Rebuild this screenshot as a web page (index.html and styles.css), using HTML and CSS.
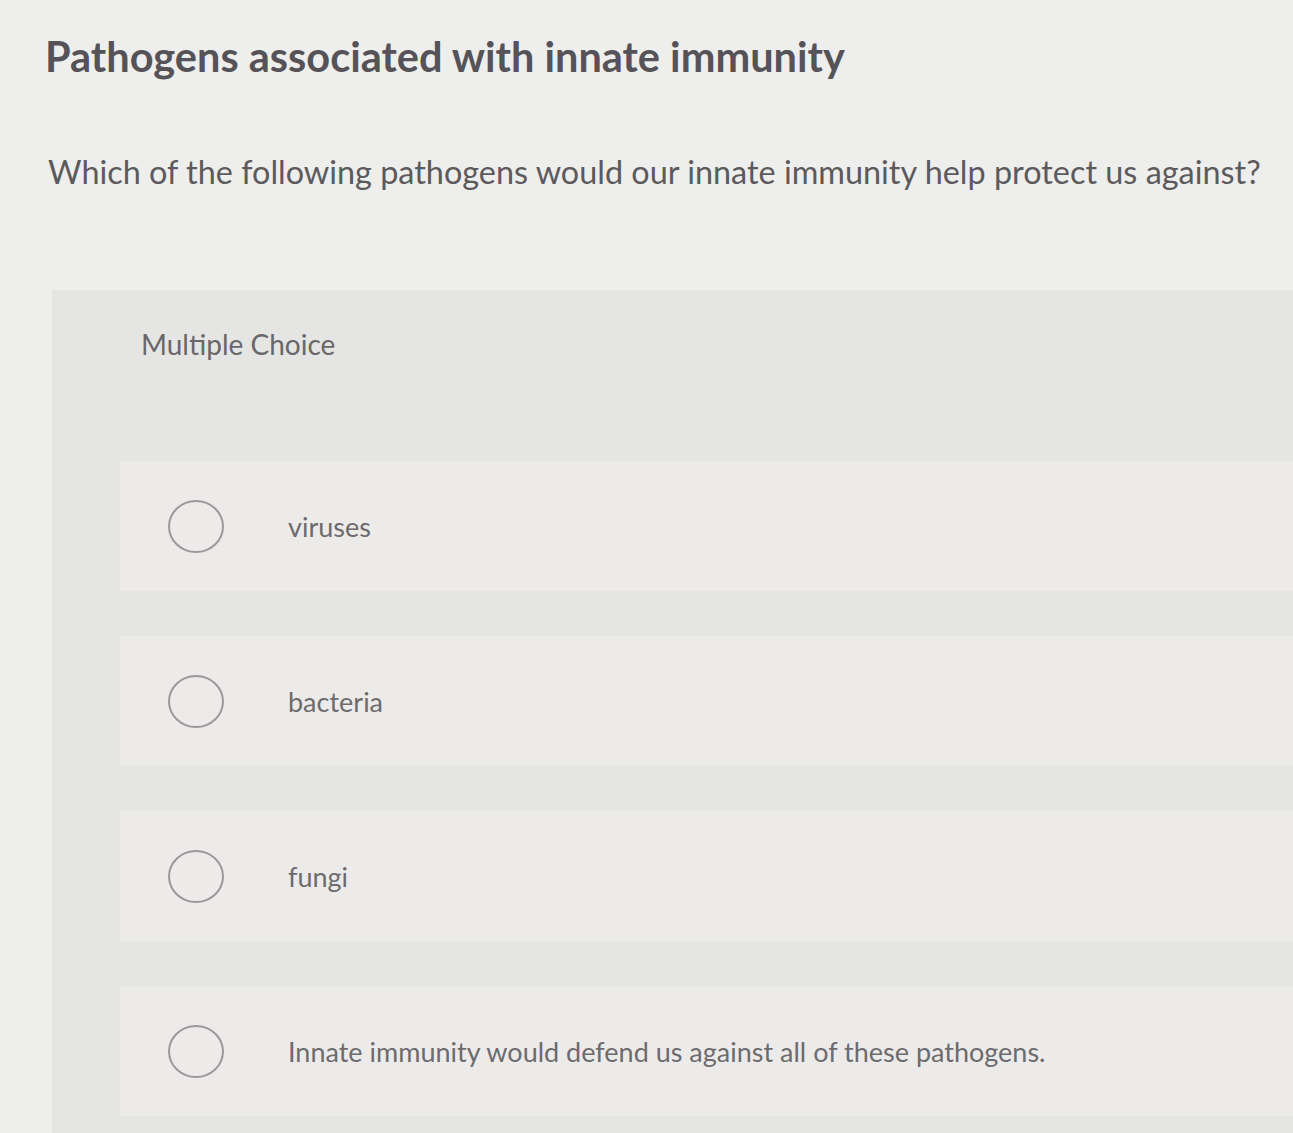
FILE: index.html
```html
<!DOCTYPE html>
<html lang="en">
<head>
<meta charset="utf-8">
<title>Pathogens associated with innate immunity</title>
<link rel="stylesheet" href="styles.css">
</head>
<body>
<main class="page">
  <h1 class="title">Pathogens associated with innate immunity</h1>
  <p class="question">Which of the following pathogens would our innate immunity help protect us against?</p>
  <section class="panel">
    <div class="kind">Multiple Choice</div>
    <div class="options">
      <label class="option"><span class="radio"></span><span class="label">viruses</span></label>
      <div class="gap"></div>
      <label class="option"><span class="radio"></span><span class="label">bacteria</span></label>
      <div class="gap"></div>
      <label class="option"><span class="radio"></span><span class="label">fungi</span></label>
      <div class="gap"></div>
      <label class="option"><span class="radio"></span><span class="label">Innate immunity would defend us against all of these pathogens.</span></label>
    </div>
  </section>
</main>
</body>
</html>
```
FILE: styles.css
```css
html, body {
  margin: 0;
  padding: 0;
  height: 100%;
}
body {
  background: #eeeeec;
  font-family: Lato, "Open Sans", "Liberation Sans", sans-serif;
  overflow: hidden;
}
.page {
  padding: 26px 0 0 45px;
}
.title {
  margin: 0;
  font-size: 41.5px;
  font-weight: 700;
  color: #565358;
  line-height: 60px;
}
.question {
  margin: 64px 0 0 3px;
  font-size: 32.4px;
  color: #5c5a5d;
  line-height: 44px;
}
.panel {
  margin: 96px 0 0 7px;
  background: #e5e5e3;
  min-height: 900px;
  padding: 34px 0 0 0;
}
.kind {
  margin-left: 89px;
  font-size: 28px;
  color: #69676a;
  line-height: 40px;
}
.options {
  margin-top: 97px;
  margin-left: 68px;
  display: flex;
  flex-direction: column;
}
.option {
  display: flex;
  align-items: center;
  height: 130px;
  background: #ecebe9;
  padding-left: 48px;
}
.gap {
  height: 45px;
}
.radio {
  width: 56px;
  height: 53px;
  border: 2.5px solid #9b989c;
  border-radius: 50%;
  box-sizing: border-box;
  flex: none;
}
.label {
  margin-left: 64px;
  font-size: 27px;
  color: #6d6b6e;
}
```
